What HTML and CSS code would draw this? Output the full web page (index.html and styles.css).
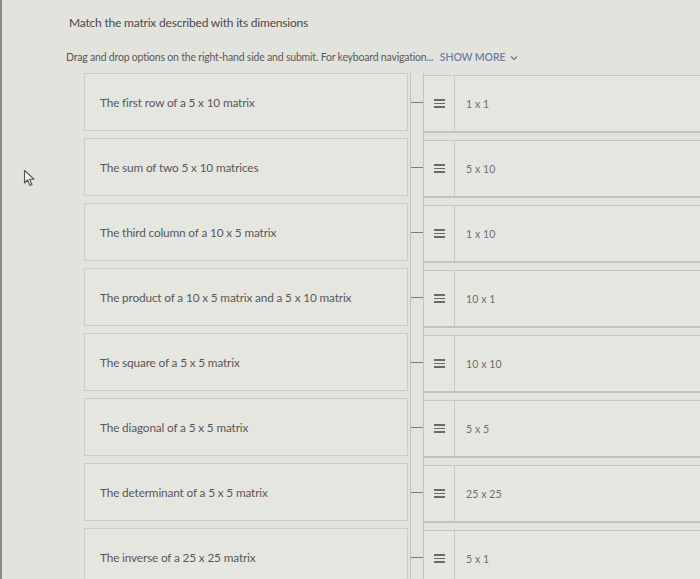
FILE: index.html
```html
<!DOCTYPE html>
<html>
<head>
<meta charset="utf-8">
<link rel="stylesheet" href="styles.css">
</head>
<body>
<div class="page">
  <h1 class="title">Match the matrix described with its dimensions</h1>
  <p class="hint">Drag and drop options on the right-hand side and submit. For keyboard navigation... <span class="more">SHOW MORE <svg class="chev" width="8" height="6" viewBox="0 0 8 6"><path d="M1 1.5 L4 4.5 L7 1.5" fill="none" stroke="#6d7ea3" stroke-width="1.4"/></svg></span></p>
  <div class="list">
    <div class="row"><div class="prompt">The first row of a 5 x 10 matrix</div><div class="link"><span class="wire"></span></div><div class="answer"><span class="handle"><i></i><i></i><i></i></span><span class="val">1 x 1</span></div></div>
    <div class="row"><div class="prompt">The sum of two 5 x 10 matrices</div><div class="link"><span class="wire"></span></div><div class="answer"><span class="handle"><i></i><i></i><i></i></span><span class="val">5 x 10</span></div></div>
    <div class="row"><div class="prompt">The third column of a 10 x 5 matrix</div><div class="link"><span class="wire"></span></div><div class="answer"><span class="handle"><i></i><i></i><i></i></span><span class="val">1 x 10</span></div></div>
    <div class="row"><div class="prompt">The product of a 10 x 5 matrix and a 5 x 10 matrix</div><div class="link"><span class="wire"></span></div><div class="answer"><span class="handle"><i></i><i></i><i></i></span><span class="val">10 x 1</span></div></div>
    <div class="row"><div class="prompt">The square of a 5 x 5 matrix</div><div class="link"><span class="wire"></span></div><div class="answer"><span class="handle"><i></i><i></i><i></i></span><span class="val">10 x 10</span></div></div>
    <div class="row"><div class="prompt">The diagonal of a 5 x 5 matrix</div><div class="link"><span class="wire"></span></div><div class="answer"><span class="handle"><i></i><i></i><i></i></span><span class="val">5 x 5</span></div></div>
    <div class="row"><div class="prompt">The determinant of a 5 x 5 matrix</div><div class="link"><span class="wire"></span></div><div class="answer"><span class="handle"><i></i><i></i><i></i></span><span class="val">25 x 25</span></div></div>
    <div class="row"><div class="prompt">The inverse of a 25 x 25 matrix</div><div class="link"><span class="wire"></span></div><div class="answer"><span class="handle"><i></i><i></i><i></i></span><span class="val">5 x 1</span></div></div>
  </div>
  <svg class="cursor" width="14" height="18" viewBox="0 0 14 18"><path d="M1.5 1.5 L1.5 14 L4.5 11 L7 16.5 L9 15.5 L6.6 10.2 L11 10.2 Z" fill="#f2f2ee" stroke="#555" stroke-width="1.1" stroke-linejoin="round"/></svg>
</div>
</body>
</html>
```
FILE: styles.css
```css
html, body {
  margin: 0;
  padding: 0;
  background: #e3e3de;
  overflow: hidden;
}
body {
  font-family: Lato, "Open Sans", sans-serif;
  color: #575757;
  width: 700px;
  height: 579px;
}
.page {
  position: relative;
  height: 579px;
  border-left: 2px solid #8a8a86;
  box-sizing: border-box;
  padding: 15px 0 0 66px;
}
.title {
  margin: 0 0 0 1px;
  font-size: 12px;
  font-weight: 400;
  color: #4a4a48;
  line-height: 16px;
  letter-spacing: -0.2px;
}
.hint {
  margin: 20px 0 0 -2px;
  font-size: 10.5px;
  line-height: 13px;
  color: #5a5a58;
  letter-spacing: -0.2px;
  white-space: nowrap;
}
.more {
  color: #6d7ea3;
  font-weight: 600;
  margin-left: 4px;
  letter-spacing: -0.1px;
}
.chev {
  vertical-align: 0px;
  margin-left: 2px;
}
.list {
  margin-top: 9px;
  margin-left: 16px;
  display: flex;
  flex-direction: column;
}
.row {
  display: grid;
  grid-template-columns: 324px 16px 300px;
  height: 65px;
}
.prompt {
  height: 56px;
  border: 1px solid #cdcdc8;
  background: #e6e6e1;
  display: flex;
  align-items: center;
  padding-left: 15px;
  font-size: 11.8px;
  color: #585856;
  letter-spacing: -0.15px;
}
.link {
  position: relative;
  border-left: 1px solid #c2c2bd;
  border-right: 1px solid #c2c2bd;
  margin-left: 2px;
  height: 65px;
  display: flex;
  align-items: flex-start;
}
.wire {
  display: block;
  margin-top: 29px;
  width: 14px;
  height: 1px;
  background: #7c7c78;
}
.answer {
  margin-top: 2px;
  height: 55px;
  border: 1px solid #c6c6c1;
  border-left: none;
  border-bottom: 2px solid #c3c3be;
  background: #e6e6e1;
  display: flex;
  align-items: center;
}
.handle {
  width: 30px;
  height: 100%;
  border-right: 1px solid #cacac5;
  display: flex;
  flex-direction: column;
  justify-content: center;
  align-items: center;
  gap: 2px;
}
.handle i {
  display: block;
  width: 11px;
  height: 1.5px;
  background: #6a6a68;
}
.val {
  padding-left: 11px;
  font-size: 10.5px;
  color: #6e6e6c;
  letter-spacing: 0.1px;
}
.cursor {
  position: absolute;
  left: 21px;
  top: 169px;
}
```
